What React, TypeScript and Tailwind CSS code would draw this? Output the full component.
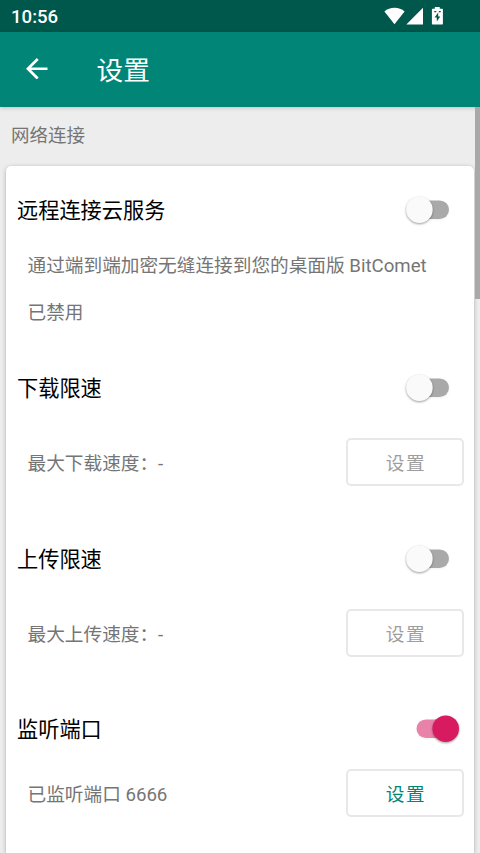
import { useState } from "react";
import clsx from "clsx";

function StatusBar() {
  return (
    <div className="flex h-8 items-center bg-[#00574b] pl-[11px] pr-9 text-white">
      <span className="pt-[2px] text-[18.6px] font-medium leading-[30px]">10:56</span>
      <svg className="ml-auto" width="60" height="20" viewBox="0 0 60 20" fill="currentColor">
        <path d="M10.5 18.3 0.4 5.4C3.2 3 6.7 1.8 10.5 1.8s7.3 1.2 10.1 3.6z" />
        <path d="M39 1.8v16.7H22.3z" />
        <path
          fillRule="evenodd"
          d="M50.8 2.7V1h4.9v1.7h2.2c.6 0 1 .4 1 1v13.8c0 .6-.4 1-1 1h-9c-.6 0-1-.4-1-1V3.7c0-.6.4-1 1-1zM54.2 6.6l-3.6 4.8h2.2v4.2l3.5-5.1h-2.1zM50.3 5h2v1.2h-2zM54.8 5h2v1.2h-2z"
        />
      </svg>
    </div>
  );
}

function Toggle({ checked, onChange }: { checked: boolean; onChange: () => void }) {
  return (
    <button
      role="switch"
      aria-checked={checked}
      onClick={onChange}
      className={clsx("h-[34px] w-[50px]", checked ? "mr-[11px]" : "mr-[22px]")}
    >
      <svg className="block drop-shadow-[0_1px_1px_rgba(0,0,0,0.05)]" width="50" height="34" viewBox="0 0 50 34">
        <rect
          x={checked ? 3.5 : 10}
          y="7.4"
          width="37"
          height="18.6"
          rx="9.3"
          fill={checked ? "#e982a8" : "#a9a9a9"}
        />
        <circle
          className="drop-shadow-[0_1px_1px_rgba(0,0,0,0.35)]"
          cx={checked ? 32.7 : 17.4}
          cy="16.7"
          r="13.3"
          fill={checked ? "#d81b60" : "#fafafa"}
        />
      </svg>
    </button>
  );
}

function TitleRow({ title, initial = false }: { title: string; initial?: boolean }) {
  const [checked, setChecked] = useState(initial);

  return (
    <div className="flex h-12 items-center justify-between pl-[11px]">
      <h2 className="pt-[2px] text-[21.2px] leading-8 text-black">{title}</h2>
      <Toggle checked={checked} onChange={() => setChecked(!checked)} />
    </div>
  );
}

function ValueRow({ text, disabled = false }: { text: string; disabled?: boolean }) {
  return (
    <div className="flex h-12 items-center justify-between pl-[21.5px] pr-[10px]">
      <span className="pt-[3px] text-[18.67px] leading-7 text-[#757575]">{text}</span>
      <button
        disabled={disabled}
        className={clsx(
          "h-12 w-[118px] rounded-[5px] border-2 border-[#e8e8e8] pl-[2px] pt-[3px] text-[18.67px] leading-7 tracking-[1.67px]",
          disabled ? "text-[#9e9e9e]" : "text-[#008577]"
        )}
      >
        设置
      </button>
    </div>
  );
}

export default function App() {
  return (
    <div className="flex h-[853px] w-[480px] flex-col overflow-hidden bg-[#ededed] font-[Roboto,'Noto_Sans_CJK_SC',sans-serif]">
      <StatusBar />
      <header className="z-10 flex h-[75px] shrink-0 items-center bg-[#008577] pl-[26px] text-white shadow-[0_1px_4px_rgba(0,0,0,0.2)]">
        <svg className="mb-[2px]" width="21.5" height="21.5" viewBox="4 4 16 16" fill="currentColor">
          <path d="M20 11H7.83l5.59-5.59L12 4l-8 8 8 8 1.41-1.41L7.83 13H20v-2z" />
        </svg>
        <h1 className="ml-[49px] pt-[2px] text-[26.67px] leading-10">设置</h1>
      </header>

      <div className="flex min-h-0 flex-1">
        <main className="flex w-[475px] flex-col pl-[6px] pr-px">
          <p className="flex h-[59px] shrink-0 items-center pb-px pl-[5px] text-[18.5px] leading-7 text-[#757575]">
            网络连接
          </p>
          <section className="flex-1 rounded-t-[5px] bg-white pt-5 shadow-[0_1px_4px_rgba(0,0,0,0.28)]">
            <TitleRow title="远程连接云服务" />
            <div className="mt-[9px] pl-[21.5px] text-[18.67px] leading-[47px] text-[#757575]">
              <p>通过端到端加密无缝连接到您的桌面版 BitComet</p>
              <p>已禁用</p>
            </div>
            <div className="mt-[27px]">
              <TitleRow title="下载限速" />
            </div>
            <div className="mt-[26px]">
              <ValueRow text="最大下载速度：-" disabled />
            </div>
            <div className="mt-[49px]">
              <TitleRow title="上传限速" />
            </div>
            <div className="mt-[26px]">
              <ValueRow text="最大上传速度：-" disabled />
            </div>
            <div className="mt-12">
              <TitleRow title="监听端口" initial />
            </div>
            <div className="mt-4">
              <ValueRow text="已监听端口 6666" />
            </div>
          </section>
        </main>
        <div className="z-10 h-48 w-[5px] bg-[#a9a9a9]" />
      </div>
    </div>
  );
}
